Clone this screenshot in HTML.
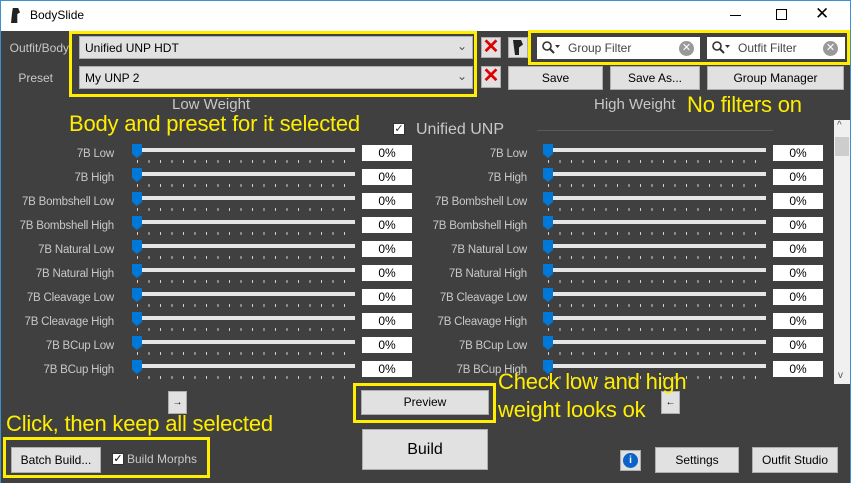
<!DOCTYPE html>
<html><head><meta charset="utf-8"><style>
*{box-sizing:border-box;margin:0;padding:0}
body{width:851px;height:483px;overflow:hidden;background:#404040;font-family:"Liberation Sans",sans-serif;position:relative}
.a{position:absolute}
.title{left:0;top:0;width:851px;height:31px;background:#fff;border:1px solid #3c8fd0;border-bottom:none}
.lbl{color:#c8c8c8;font-size:12px;text-align:right}
.combo{background:#e1e1e1;border:1px solid #adadad;font-size:12px;color:#000;padding:4px 5px}
.btn{background:#e1e1e1;border:1px solid #adadad;font-size:12px;color:#000;text-align:center}
.yb{border:3px solid #ffee00}
.yt{color:#ffee00;font-size:22px;white-space:nowrap;letter-spacing:-0.2px}
.rx{background:#e1e1e1;border:1px solid #adadad;color:#e00000;font-size:20px;font-weight:bold;text-align:center;line-height:19px}
.thumb{width:10px;height:14px;background:#0078d7;clip-path:polygon(0 0,100% 0,100% 70%,50% 100%,0 70%)}
.tl{height:3px;background:repeating-linear-gradient(90deg,#cfcfcf 0 1px,transparent 1px 11.5px)}
.val{background:#fff;font-size:12px;text-align:center;line-height:16px;width:50px;height:16px;color:#000}
.rl{color:#c8c8c8;font-size:11.5px;text-align:right;width:110px;letter-spacing:-0.2px}
</style></head><body>
<div class="a title"></div>
<div class="a" style="left:11px;top:8px;width:9px;height:15px;background:#222;clip-path:polygon(20% 0,80% 0,100% 30%,70% 40%,70% 100%,0 100%,10% 40%)"></div>
<div class="a" style="left:30px;top:8px;font-size:12px;color:#000">BodySlide</div>
<div class="a" style="left:730px;top:15px;width:11px;height:1px;background:#000"></div>
<div class="a" style="left:776px;top:9px;width:11px;height:11px;border:1px solid #000"></div>
<div class="a" style="left:815px;top:4px;font-size:17px;color:#000">✕</div>
<div class="a" style="left:0;top:31px;width:1px;height:452px;background:#3c8fd0"></div>
<div class="a" style="left:850px;top:31px;width:1px;height:452px;background:#3c8fd0"></div>

<div class="a lbl" style="left:3px;top:41px;width:66px">Outfit/Body</div>
<div class="a lbl" style="left:3px;top:71px;width:50px">Preset</div>
<div class="a yb" style="left:69px;top:31px;width:408px;height:66px"></div>
<div class="a combo" style="left:79px;top:36px;width:394px;height:23px">Unified UNP HDT<span style="position:absolute;right:5px;top:2px;color:#555">⌄</span></div>
<div class="a combo" style="left:79px;top:66px;width:394px;height:23px">My UNP 2<span style="position:absolute;right:5px;top:2px;color:#555">⌄</span></div>
<div class="a rx" style="left:481px;top:37px;width:20px;height:21px">✕</div>
<div class="a rx" style="left:481px;top:66px;width:20px;height:22px">✕</div>
<div class="a btn" style="left:508px;top:37px;width:20px;height:21px"><div style="position:absolute;left:4px;top:2px;width:10px;height:15px;background:#222;clip-path:polygon(0 0,80% 0,100% 30%,60% 50%,60% 100%,20% 100%)"></div></div>
<div class="a yb" style="left:528px;top:30px;width:322px;height:35px"></div>
<div class="a" style="left:537px;top:37px;width:163px;height:22px;background:#fff;font-size:12px;color:#444;padding:4px 0 0 31px">Group Filter</div>
<div class="a" style="left:707px;top:37px;width:138px;height:22px;background:#fff;font-size:12px;color:#444;padding:4px 0 0 31px">Outfit Filter</div>
<svg class="a" style="left:541px;top:40px" width="20" height="16"><circle cx="6" cy="6" r="4" fill="none" stroke="#333" stroke-width="1.6"/><line x1="9" y1="9" x2="13" y2="13" stroke="#333" stroke-width="2"/><polygon points="14,5 19,5 16.5,8" fill="#333"/></svg>
<svg class="a" style="left:711px;top:40px" width="20" height="16"><circle cx="6" cy="6" r="4" fill="none" stroke="#333" stroke-width="1.6"/><line x1="9" y1="9" x2="13" y2="13" stroke="#333" stroke-width="2"/><polygon points="14,5 19,5 16.5,8" fill="#333"/></svg>
<div class="a" style="left:679px;top:41px;width:15px;height:15px;border-radius:50%;background:#999;color:#fff;font-size:11px;text-align:center;line-height:15px">✕</div>
<div class="a" style="left:823px;top:41px;width:15px;height:15px;border-radius:50%;background:#999;color:#fff;font-size:11px;text-align:center;line-height:15px">✕</div>
<div class="a btn" style="left:508px;top:66px;width:95px;height:24px;line-height:22px">Save</div>
<div class="a btn" style="left:610px;top:66px;width:90px;height:24px;line-height:22px">Save As...</div>
<div class="a btn" style="left:707px;top:66px;width:137px;height:24px;line-height:22px">Group Manager</div>

<div class="a" style="left:172px;top:96px;color:#c8c8c8;font-size:15px">Low Weight</div>
<div class="a" style="left:594px;top:96px;color:#c8c8c8;font-size:15px">High Weight</div>
<div class="a yt" style="left:687px;top:92px">No filters on</div>
<div class="a yt" style="left:69px;top:111px">Body and preset for it selected</div>
<div class="a" style="left:393px;top:123px;width:12px;height:12px;background:#fff;border:1px solid #333;font-size:11px;line-height:10px;text-align:center;color:#333">✓</div>
<div class="a" style="left:416px;top:121px;color:#c8c8c8;font-size:16px">Unified UNP</div>
<div class="a" style="left:537px;top:130px;width:236px;height:1px;background:#5a5a5a"></div>

<div class="a" style="left:834px;top:120px;width:16px;height:264px;background:#f0f0f0"></div>
<div class="a" style="left:835px;top:137px;width:14px;height:19px;background:#cdcdcd"></div>
<div class="a" style="left:837px;top:120px;font-size:10px;color:#555">^</div>
<div class="a" style="left:838px;top:370px;font-size:10px;color:#555">v</div>

<div class="a" style="left:0;top:2px">
<div class="a rl" style="left:4px;top:146px">7B Low</div>
<div class="a rl" style="left:4px;top:170px">7B High</div>
<div class="a rl" style="left:4px;top:194px">7B Bombshell Low</div>
<div class="a rl" style="left:4px;top:218px">7B Bombshell High</div>
<div class="a rl" style="left:4px;top:242px">7B Natural Low</div>
<div class="a rl" style="left:4px;top:266px">7B Natural High</div>
<div class="a rl" style="left:4px;top:290px">7B Cleavage Low</div>
<div class="a rl" style="left:4px;top:314px">7B Cleavage High</div>
<div class="a rl" style="left:4px;top:338px">7B BCup Low</div>
<div class="a rl" style="left:4px;top:362px">7B BCup High</div>
<div class="a rl" style="left:417px;top:146px">7B Low</div>
<div class="a rl" style="left:417px;top:170px">7B High</div>
<div class="a rl" style="left:417px;top:194px">7B Bombshell Low</div>
<div class="a rl" style="left:417px;top:218px">7B Bombshell High</div>
<div class="a rl" style="left:417px;top:242px">7B Natural Low</div>
<div class="a rl" style="left:417px;top:266px">7B Natural High</div>
<div class="a rl" style="left:417px;top:290px">7B Cleavage Low</div>
<div class="a rl" style="left:417px;top:314px">7B Cleavage High</div>
<div class="a rl" style="left:417px;top:338px">7B BCup Low</div>
<div class="a rl" style="left:417px;top:362px">7B BCup High</div>
</div>
<div class="a" style="left:134px;top:148px;width:221px;height:230px;background:repeating-linear-gradient(180deg,#e6e6e6 0 4px,transparent 4px 24px)"></div>
<div class="a" style="left:546px;top:148px;width:220px;height:230px;background:repeating-linear-gradient(180deg,#e6e6e6 0 4px,transparent 4px 24px)"></div>
<div class="a" style="left:0;top:0">
<div class="a tl" style="left:137px;top:160px;width:218px"></div><div class="a tl" style="left:137px;top:184px;width:218px"></div><div class="a tl" style="left:137px;top:208px;width:218px"></div><div class="a tl" style="left:137px;top:232px;width:218px"></div><div class="a tl" style="left:137px;top:256px;width:218px"></div><div class="a tl" style="left:137px;top:280px;width:218px"></div><div class="a tl" style="left:137px;top:304px;width:218px"></div><div class="a tl" style="left:137px;top:328px;width:218px"></div><div class="a tl" style="left:137px;top:352px;width:218px"></div><div class="a tl" style="left:137px;top:376px;width:218px"></div>
<div class="a tl" style="left:548px;top:160px;width:218px"></div><div class="a tl" style="left:548px;top:184px;width:218px"></div><div class="a tl" style="left:548px;top:208px;width:218px"></div><div class="a tl" style="left:548px;top:232px;width:218px"></div><div class="a tl" style="left:548px;top:256px;width:218px"></div><div class="a tl" style="left:548px;top:280px;width:218px"></div><div class="a tl" style="left:548px;top:304px;width:218px"></div><div class="a tl" style="left:548px;top:328px;width:218px"></div><div class="a tl" style="left:548px;top:352px;width:218px"></div><div class="a tl" style="left:548px;top:376px;width:218px"></div>
</div>
<div class="a" style="left:0;top:0">
<div class="a thumb" style="left:132px;top:144px"></div><div class="a thumb" style="left:132px;top:168px"></div><div class="a thumb" style="left:132px;top:192px"></div><div class="a thumb" style="left:132px;top:216px"></div><div class="a thumb" style="left:132px;top:240px"></div><div class="a thumb" style="left:132px;top:264px"></div><div class="a thumb" style="left:132px;top:288px"></div><div class="a thumb" style="left:132px;top:312px"></div><div class="a thumb" style="left:132px;top:336px"></div><div class="a thumb" style="left:132px;top:360px"></div>
<div class="a thumb" style="left:543px;top:144px"></div><div class="a thumb" style="left:543px;top:168px"></div><div class="a thumb" style="left:543px;top:192px"></div><div class="a thumb" style="left:543px;top:216px"></div><div class="a thumb" style="left:543px;top:240px"></div><div class="a thumb" style="left:543px;top:264px"></div><div class="a thumb" style="left:543px;top:288px"></div><div class="a thumb" style="left:543px;top:312px"></div><div class="a thumb" style="left:543px;top:336px"></div><div class="a thumb" style="left:543px;top:360px"></div>
</div>
<div class="a" style="left:0;top:0">
<div class="a val" style="left:362px;top:145px">0%</div><div class="a val" style="left:362px;top:169px">0%</div><div class="a val" style="left:362px;top:193px">0%</div><div class="a val" style="left:362px;top:217px">0%</div><div class="a val" style="left:362px;top:241px">0%</div><div class="a val" style="left:362px;top:265px">0%</div><div class="a val" style="left:362px;top:289px">0%</div><div class="a val" style="left:362px;top:313px">0%</div><div class="a val" style="left:362px;top:337px">0%</div><div class="a val" style="left:362px;top:361px">0%</div>
<div class="a val" style="left:773px;top:145px">0%</div><div class="a val" style="left:773px;top:169px">0%</div><div class="a val" style="left:773px;top:193px">0%</div><div class="a val" style="left:773px;top:217px">0%</div><div class="a val" style="left:773px;top:241px">0%</div><div class="a val" style="left:773px;top:265px">0%</div><div class="a val" style="left:773px;top:289px">0%</div><div class="a val" style="left:773px;top:313px">0%</div><div class="a val" style="left:773px;top:337px">0%</div><div class="a val" style="left:773px;top:361px">0%</div>
</div>

<div class="a btn" style="left:168px;top:391px;width:19px;height:23px;line-height:21px;font-size:10px">→</div>
<div class="a btn" style="left:661px;top:391px;width:19px;height:23px;line-height:21px;font-size:10px">←</div>
<div class="a yb" style="left:353px;top:383px;width:143px;height:40px"></div>
<div class="a btn" style="left:361px;top:390px;width:128px;height:25px;line-height:23px">Preview</div>
<div class="a yt" style="left:498px;top:369px">Check low and high</div>
<div class="a yt" style="left:498px;top:397px">weight looks ok</div>
<div class="a btn" style="left:362px;top:429px;width:126px;height:41px;line-height:39px;font-size:16px">Build</div>
<div class="a yt" style="left:6px;top:411px">Click, then keep all selected</div>
<div class="a yb" style="left:3px;top:437px;width:207px;height:41px"></div>
<div class="a btn" style="left:11px;top:447px;width:90px;height:26px;line-height:24px">Batch Build...</div>
<div class="a" style="left:112px;top:453px;width:12px;height:12px;background:#fff;border:1px solid #333;font-size:11px;line-height:10px;text-align:center;color:#000">✓</div>
<div class="a" style="left:127px;top:452px;color:#c8c8c8;font-size:12px">Build Morphs</div>
<div class="a btn" style="left:620px;top:450px;width:21px;height:21px"><div style="position:absolute;left:2px;top:2px;width:15px;height:15px;border-radius:50%;background:#0a64c8;color:#fff;font-size:10px;line-height:15px;font-weight:bold">i</div></div>
<div class="a btn" style="left:655px;top:447px;width:84px;height:26px;line-height:24px">Settings</div>
<div class="a btn" style="left:752px;top:447px;width:86px;height:26px;line-height:24px">Outfit Studio</div>
</body></html>
